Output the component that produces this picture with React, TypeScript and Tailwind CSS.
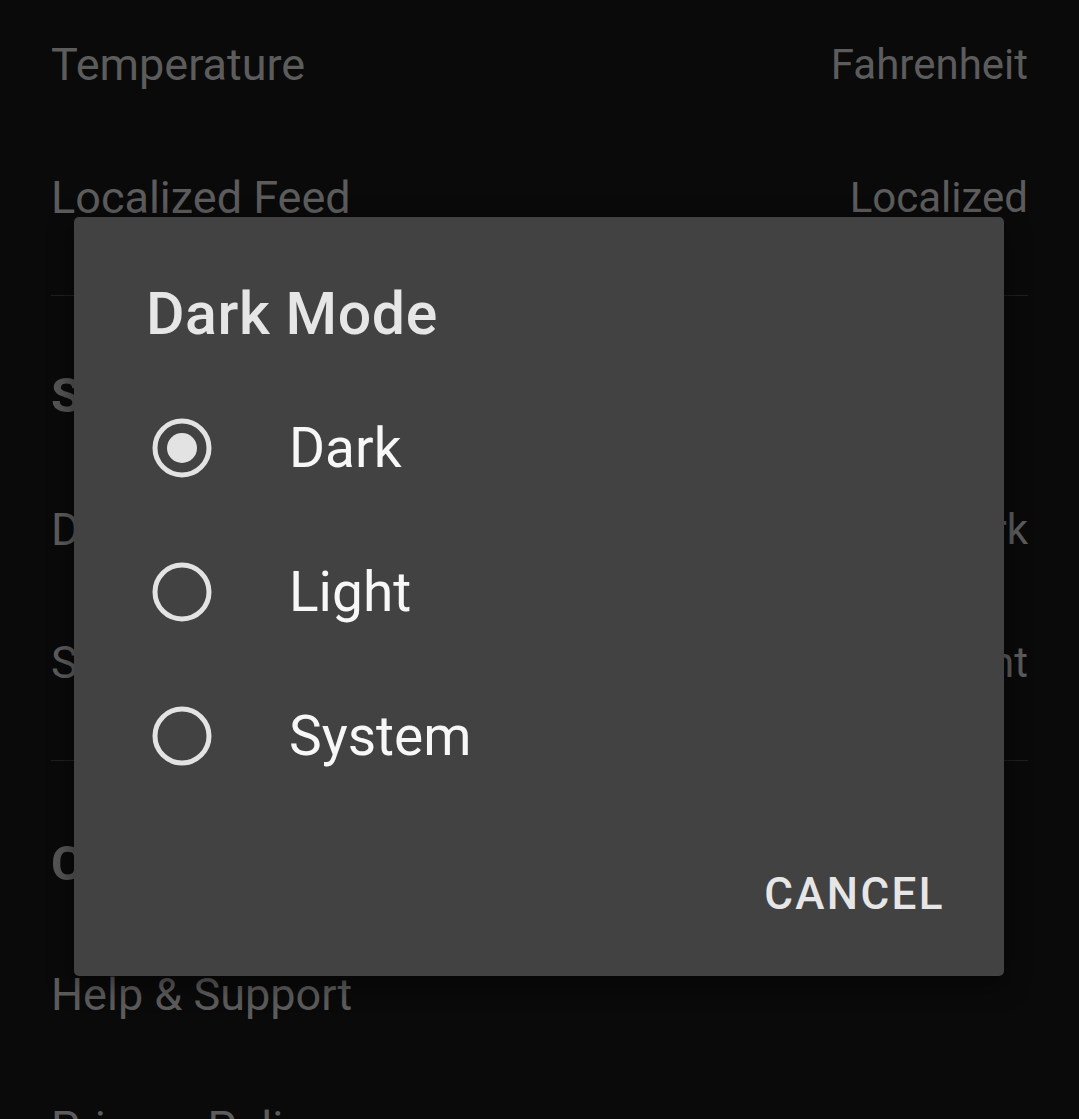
import { useState } from 'react';

const options = ['Dark', 'Light', 'System'];

function Radio({ checked }: { checked: boolean }) {
  return (
    <svg width="60" height="60" viewBox="0 0 60 60" className="shrink-0">
      <circle cx="30" cy="30" r="27" fill="none" stroke="#e3e3e3" strokeWidth="5" />
      {checked && <circle cx="30" cy="30" r="15" fill="#e3e3e3" />}
    </svg>
  );
}

function Row({ label, value }: { label: string; value?: string }) {
  return (
    <div className="h-[133px] flex items-center justify-between text-[#5c5c5c]">
      <span className="text-[45px] leading-[45px]">{label}</span>
      {value && <span className="text-[42px] leading-[45px]">{value}</span>}
    </div>
  );
}

export default function App() {
  const [mode, setMode] = useState('Dark');

  return (
    <div
      className="relative w-[1079px] h-[1119px] overflow-hidden bg-[#0a0a0a]"
      style={{ fontFamily: "Roboto, 'Noto Sans', sans-serif" }}
    >
      {/* settings list behind the dialog */}
      <div className="px-[51px] -mt-[2px] flex flex-col">
        <Row label="Temperature" value="Fahrenheit" />
        <Row label="Localized Feed" value="Localized" />
        <div className="mt-[31px] h-px bg-[#1f1f1f]" />
        <div className="pt-[76px] text-[49px] leading-[48px] font-bold text-[#555555]">Style</div>
        <div className="mt-[43px]">
          <Row label="Dark Mode" value="Dark" />
          <Row label="Start Screen" value="Current" />
        </div>
        <div className="mt-[31px] h-px bg-[#1f1f1f]" />
        <div className="pt-[79px] text-[49px] leading-[48px] font-bold text-[#555555]">Contact</div>
        <div className="mt-[40px]">
          <Row label="Help & Support" />
          <Row label="Privacy Policy" />
        </div>
      </div>

      {/* dialog */}
      <div className="absolute left-[74px] top-[217px] w-[930px] h-[759px] rounded-[5px] bg-[#424242] shadow-[0_8px_24px_rgba(0,0,0,0.5)] pt-[68px] pl-[72px] pr-[59px] flex flex-col">
        <h2 className="text-[59px] leading-[58px] font-medium text-[#e6e6e6] tracking-[0.01em]">Dark Mode</h2>
        <div className="mt-[33px] flex flex-col">
          {options.map((o) => (
            <button
              key={o}
              onClick={() => setMode(o)}
              className="h-[144px] flex items-center gap-[77px] pl-[6px] text-left"
            >
              <Radio checked={mode === o} />
              <span className="text-[55px] leading-[55px] text-[#f7f7f7]">{o}</span>
            </button>
          ))}
        </div>
        <div className="mt-[64px] flex justify-end">
          <button className="text-[44px] leading-[44px] font-medium tracking-[2.4px] text-[#e6e6e6]">CANCEL</button>
        </div>
      </div>
    </div>
  );
}
